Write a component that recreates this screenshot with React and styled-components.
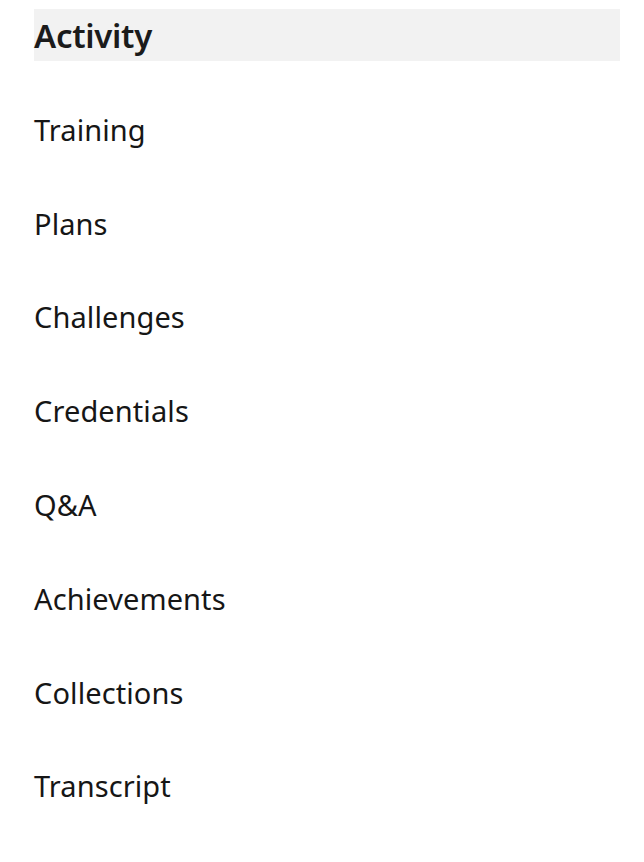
import React from "react";
import styled, { createGlobalStyle } from "styled-components";

const GlobalStyle = createGlobalStyle`
  body {
    margin: 0;
    background: #ffffff;
    font-family: "Segoe UI", "Noto Sans", "Liberation Sans", sans-serif;
    color: #171717;
  }
`;

const Container = styled.nav`
  padding: 9px 24px 0 34px;
`;

const Header = styled.h2`
  margin: 0;
  height: 52px;
  display: flex;
  align-items: center;
  padding-top: 1px;
  box-sizing: border-box;
  background-color: #f2f2f2;
  font-size: 33px;
  font-weight: 600;
  color: #1b1b1b;
  letter-spacing: -0.3px;
`;

const List = styled.ul`
  list-style: none;
  margin: 0;
  padding: 21.5px 0 0;
`;

const Item = styled.li`
  height: 93.8px;
  display: flex;
  align-items: center;
  font-size: 29px;
  color: #161616;
  letter-spacing: 0.1px;
`;

const items = [
  "Training",
  "Plans",
  "Challenges",
  "Credentials",
  "Q&A",
  "Achievements",
  "Collections",
  "Transcript",
];

const App = () => {
  return (
    <Container>
      <GlobalStyle />
      <Header>Activity</Header>
      <List>
        {items.map((label) => (
          <Item key={label}>{label}</Item>
        ))}
      </List>
    </Container>
  );
};

export default App;
